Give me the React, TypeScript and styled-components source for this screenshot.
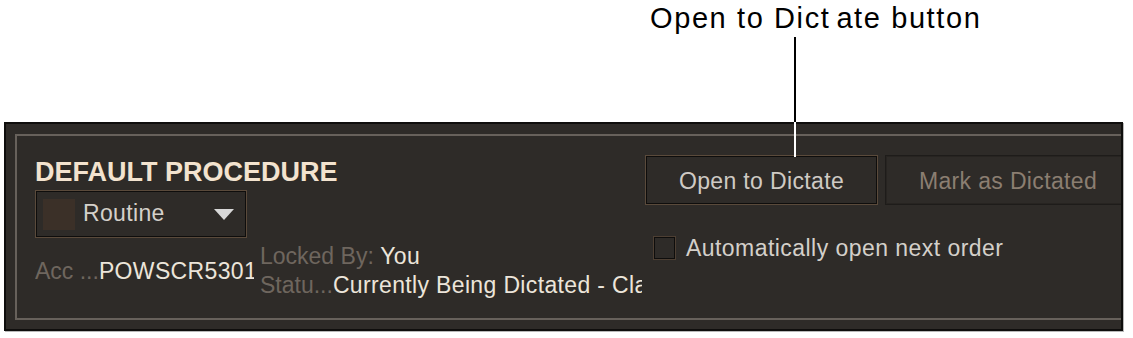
import React from "react";
import styled, { createGlobalStyle } from "styled-components";

const Global = createGlobalStyle`
  html, body { margin: 0; padding: 0; background: #ffffff; }
  body { font-family: "Liberation Sans", Arial, sans-serif; }
`;

const Page = styled.div`
  position: relative;
  width: 1133px;
  height: 338px;
  overflow: hidden;
  background: #ffffff;
`;

const Header = styled.div`
  height: 122px;
  box-sizing: border-box;
  padding: 4px 0 0 650px;
`;

const CalloutLabel = styled.div`
  font-family: "Liberation Sans", Arial, sans-serif;
  font-size: 29px;
  line-height: 29px;
  letter-spacing: 1.6px;
  color: #000000;
  white-space: nowrap;
`;

const Gap = styled.span`
  margin-left: 6px;
`;

const Leader = styled.div`
  position: absolute;
  left: 794px;
  top: 37px;
  width: 2px;
  height: 120px;
  background: linear-gradient(to bottom, #000 0, #000 85px, #fff 85px, #fff 100%);
  z-index: 2;
`;

const Panel = styled.div`
  margin-left: 4px;
  width: 1119px;
  height: 209px;
  box-sizing: border-box;
  border: 2px solid #0f0e0d;
  background: #2e2b28;
  box-shadow: 1px 1px 0 #b8b8b8;
  overflow: hidden;
`;

const Frame = styled.div`
  margin: 10px 0 0 9px;
  width: 1200px;
  height: 186px;
  box-sizing: border-box;
  border: 2px solid #67615b;
  padding: 21px 0 0 18px;
  display: flex;
`;

const LeftCol = styled.div`
  width: 607px;
  overflow: hidden;
  display: flex;
  flex-direction: column;
`;

const Title = styled.div`
  margin-top: 2px;
  font-size: 27px;
  line-height: 27px;
  font-weight: bold;
  color: #f3e3cf;
  white-space: nowrap;
`;

const Dropdown = styled.div`
  margin-top: 4px;
  width: 212px;
  height: 48px;
  box-sizing: border-box;
  border: 1px solid #5a4a3b;
  box-shadow: inset 0 0 0 1px #0e0d0c;
  display: flex;
  align-items: center;
  padding: 0 12px 0 7px;
  gap: 8px;
`;

const Swatch = styled.div<{ $color: string }>`
  width: 32px;
  height: 31px;
  background: ${(p) => p.$color};
`;

const DropText = styled.div`
  flex: 1;
  font-size: 23px;
  letter-spacing: 0.35px;
  color: #d4d0ca;
  margin-top: -2px;
`;

const InfoRow = styled.div`
  margin-top: 4px;
  display: flex;
  align-items: center;
  gap: 6px;
`;

const AccCol = styled.div`
  width: 219px;
  overflow: hidden;
  white-space: nowrap;
`;

const StatusCol = styled.div`
  flex: 1;
  overflow: hidden;
  white-space: nowrap;
`;

const Line = styled.div`
  font-size: 23px;
  line-height: 29px;
  letter-spacing: 0.35px;
  white-space: nowrap;
`;

const Label = styled.span`
  color: #6e665e;
  letter-spacing: 0;
`;

const Value = styled.span`
  color: #ece5da;
`;

const RightCol = styled.div`
  margin-left: 3px;
  margin-top: -2px;
  display: flex;
  flex-direction: column;
`;

const ButtonRow = styled.div`
  display: flex;
  gap: 7px;
`;

const Button = styled.div<{ $disabled?: boolean; $width: number }>`
  width: ${(p) => p.$width}px;
  height: 50px;
  box-sizing: border-box;
  display: flex;
  align-items: center;
  justify-content: center;
  font-size: 23px;
  letter-spacing: 0.35px;
  white-space: nowrap;
  color: ${(p) => (p.$disabled ? "#8b7e71" : "#cfcac4")};
  border: 1px solid ${(p) => (p.$disabled ? "#1e1c1a" : "#5a4a3b")};
  box-shadow: ${(p) =>
    p.$disabled ? "inset 0 0 0 1px #272421" : "inset 0 0 0 1px #0e0d0c"};
  padding-top: 2px;
`;

const CheckRow = styled.div`
  margin-top: 31px;
  margin-left: 8px;
  display: flex;
  align-items: center;
  gap: 10px;
`;

const CheckBox = styled.div`
  width: 23px;
  height: 24px;
  box-sizing: border-box;
  border: 1px solid #4d3f33;
  box-shadow: inset 0 0 0 1px #0e0d0c;
`;

const CheckLabel = styled.div`
  font-size: 23px;
  line-height: 24px;
  letter-spacing: 0.45px;
  color: #d4d0ca;
  white-space: nowrap;
`;

export default function App() {
  return (
    <>
      <Global />
      <Page>
        <Header>
          <CalloutLabel>
            Open to Dict<Gap />ate button
          </CalloutLabel>
        </Header>
        <Leader />
        <Panel>
          <Frame>
            <LeftCol>
              <Title>DEFAULT PROCEDURE</Title>
              <Dropdown>
                <Swatch $color="#3b3028" />
                <DropText>Routine</DropText>
                <svg width="20" height="11" viewBox="0 0 20 11">
                  <polygon points="0,0 20,0 10,11" fill="#d8d8d8" />
                </svg>
              </Dropdown>
              <InfoRow>
                <AccCol>
                  <Line>
                    <Label>Acc ...</Label>
                    <Value>POWSCR53017</Value>
                  </Line>
                </AccCol>
                <StatusCol>
                  <Line>
                    <Label>Locked By: </Label>
                    <Value>You</Value>
                  </Line>
                  <Line>
                    <Label>Statu...</Label>
                    <Value>Currently Being Dictated - Claimed</Value>
                  </Line>
                </StatusCol>
              </InfoRow>
            </LeftCol>
            <RightCol>
              <ButtonRow>
                <Button $width={233}>Open to Dictate</Button>
                <Button $width={246} $disabled>
                  Mark as Dictated
                </Button>
              </ButtonRow>
              <CheckRow>
                <CheckBox />
                <CheckLabel>Automatically open next order</CheckLabel>
              </CheckRow>
            </RightCol>
          </Frame>
        </Panel>
      </Page>
    </>
  );
}
